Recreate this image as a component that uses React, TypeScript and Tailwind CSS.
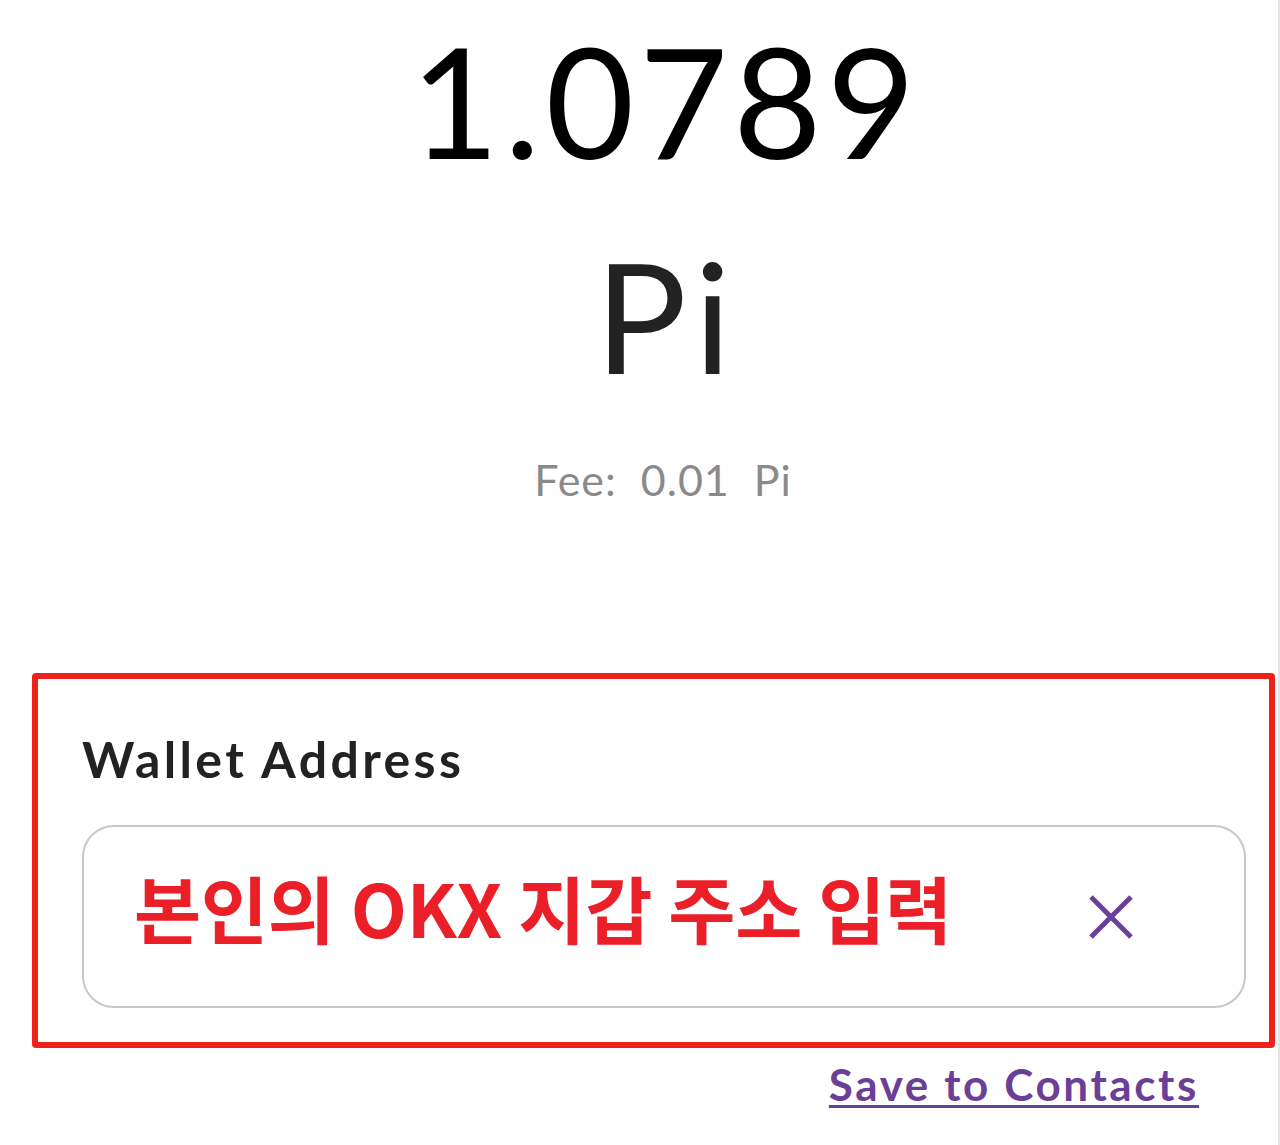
import React from 'react'

const sans = "font-['Lato','Open_Sans',sans-serif]"

function ClearIcon() {
  return (
    <svg width="46" height="46" viewBox="0 0 46 46" fill="none" aria-hidden>
      <path d="M3 3L43 43M43 3L3 43" stroke="#6a409a" strokeWidth="5" />
    </svg>
  )
}

export default function App() {
  return (
    <div className={`min-h-[1145px] w-full bg-white border-r-2 border-[#e4e4e4] ${sans}`}>
      {/* amount */}
      <div className="pl-[82px] pr-[34px] pt-[24px] flex flex-col items-center">
        <div className="text-[153px] leading-none text-black tracking-[5px] pl-[5px]">1.0789</div>
        <div className="mt-[62px] text-[153px] leading-none text-[#222] tracking-[8px] pl-[8px]">Pi</div>
        <div className="mt-[66px] text-[43px] leading-none text-[#8a8a8a] whitespace-pre tracking-[1px]">
          Fee:  0.01  Pi
        </div>
      </div>

      {/* wallet address (highlighted) */}
      <div className="mt-[172px] ml-[32px] mr-[3px] border-[6px] border-[#f0211a] rounded-[4px] pl-[44px] pr-[23px] pt-[55px] pb-[34px]">
        <div className="text-[50px] leading-none font-bold text-[#222] tracking-[3.4px]">Wallet Address</div>
        <div className="mt-[41px] h-[183px] border-2 border-[#c8c8c8] rounded-[32px] flex items-center justify-between pl-[50px] pr-[110px]">
          <span className="text-[73px] leading-none font-bold text-[#ea1f28] font-['Noto_Sans_CJK_KR',sans-serif] -mt-[20px] tracking-[-0.3px]">
            본인의 OKX 지갑 주소 입력
          </span>
          <ClearIcon />
        </div>
      </div>

      <div className="flex justify-end pr-[79px] mt-[14px]">
        <a className="text-[44px] leading-none font-bold text-[#6b3f96] underline decoration-[3px] underline-offset-[4px] tracking-[2.6px]">
          Save to Contacts
        </a>
      </div>
    </div>
  )
}
